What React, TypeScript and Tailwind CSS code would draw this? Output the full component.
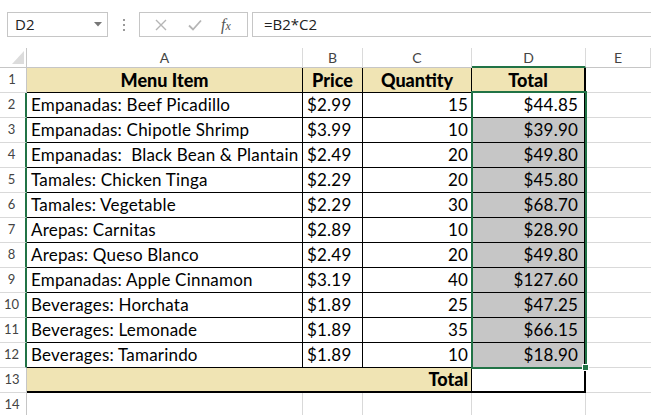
import React from 'react';

const items: [string, string, number, string][] = [
  ['Empanadas: Beef Picadillo', '$2.99', 15, '$44.85'],
  ['Empanadas: Chipotle Shrimp', '$3.99', 10, '$39.90'],
  ['Empanadas:  Black Bean & Plantain', '$2.49', 20, '$49.80'],
  ['Tamales: Chicken Tinga', '$2.29', 20, '$45.80'],
  ['Tamales: Vegetable', '$2.29', 30, '$68.70'],
  ['Arepas: Carnitas', '$2.89', 10, '$28.90'],
  ['Arepas: Queso Blanco', '$2.49', 20, '$49.80'],
  ['Empanadas: Apple Cinnamon', '$3.19', 40, '$127.60'],
  ['Beverages: Horchata', '$1.89', 25, '$47.25'],
  ['Beverages: Lemonade', '$1.89', 35, '$66.15'],
  ['Beverages: Tamarindo', '$1.89', 10, '$18.90'],
];

const cellFont = { fontFamily: 'Lato, "Open Sans", sans-serif' };

function RowNum({ n, selected }: { n: number; selected?: boolean }) {
  return (
    <div
      className={
        'h-[25px] flex items-center justify-center text-[13px] text-[#444] tracking-normal border-b border-[#d9d9d9] pr-[2px] ' +
        (selected ? 'border-r-2 border-r-[#217346]' : 'border-r border-r-[#c6c6c6]')
      }
    >
      {n}
    </div>
  );
}

export default function App() {
  return (
    <div className="w-[651px] h-[415px] overflow-hidden bg-white text-black" style={cellFont}>
      {/* formula bar */}
      <div className="h-[48px] pt-[12px] flex items-start" style={{ fontFamily: '"Open Sans", "Noto Sans", sans-serif' }}>
        <div className="ml-[7px] w-[101px] h-[25px] border border-[#c6c6c6] flex items-center pl-[7px] pr-[5px] text-[15px] text-[#222]">
          <span className="flex-1">D2</span>
          <svg width="8" height="5" viewBox="0 0 8 5">
            <polygon points="0,0 8,0 4,4.5" fill="#777" />
          </svg>
        </div>
        <div className="w-[31px] h-[25px] flex flex-col items-center justify-center gap-[3px]">
          <span className="w-[2px] h-[2px] bg-[#9a9a9a]" />
          <span className="w-[2px] h-[2px] bg-[#9a9a9a]" />
          <span className="w-[2px] h-[2px] bg-[#9a9a9a]" />
        </div>
        <div className="w-[109px] h-[25px] border border-[#c6c6c6] flex items-center">
          <svg className="ml-[15px]" width="12" height="12" viewBox="0 0 12 12">
            <path d="M1 1 L11 11 M11 1 L1 11" stroke="#b5b5b5" strokeWidth="1.4" fill="none" />
          </svg>
          <svg className="ml-[21px]" width="14" height="12" viewBox="0 0 14 12">
            <path d="M1 6.5 L5 10.5 L13 1.5" stroke="#b5b5b5" strokeWidth="1.8" fill="none" />
          </svg>
          <span
            className="ml-[19px] italic text-[16px] text-[#555] leading-none"
            style={{ fontFamily: '"Liberation Serif", serif' }}
          >
            f<span className="text-[12px]">x</span>
          </span>
        </div>
        <div className="ml-[4px] flex-1 h-[25px] border border-r-0 border-[#c6c6c6] flex items-center pl-[11px] text-[15px] text-[#222]">
          =B2*C2
        </div>
      </div>

      {/* sheet */}
      <div className="relative">
        <div className="grid grid-cols-[27px_276px_60px_109px_114px_1fr]">
          {/* column headers */}
          <div className="h-[20px] border-r border-b border-[#c6c6c6] flex items-end justify-end pr-[2px] pb-[3px]">
            <svg width="12" height="13" viewBox="0 0 12 13">
              <polygon points="12,0 12,13 0,13" fill="#dcdcdc" />
            </svg>
          </div>
          {['A', 'B', 'C', 'D', 'E'].map((c) => (
            <div
              key={c}
              className={
                'h-[20px] flex items-center justify-center text-[14px] text-[#444] border-r border-r-[#dadada] ' +
                (c === 'D' ? 'border-b-2 border-b-[#217346]' : 'border-b border-b-[#c6c6c6]')
              }
            >
              {c}
            </div>
          ))}

          {/* row 1 */}
          <RowNum n={1} />
          {['Menu Item', 'Price', 'Quantity'].map((h) => (
            <div
              key={h}
              className="h-[25px] bg-[#f0e4b4] border-r border-b border-black flex items-center justify-center font-black text-[18px]"
            >
              {h}
            </div>
          ))}
          <div className="h-[25px] bg-[#f0e4b4] border-r-2 border-b border-black flex items-center justify-center font-black text-[18px]">
            Total
          </div>
          <div className="h-[25px] border-b border-[#d9d9d9]" />

          {/* data rows */}
          {items.map(([name, price, qty, total], i) => (
            <React.Fragment key={name}>
              <RowNum n={i + 2} selected />
              <div className="h-[25px] border-r border-b border-black flex items-center pl-[4px] text-[17px] tracking-[0.2px] whitespace-pre">
                {name}
              </div>
              <div className="h-[25px] border-r border-b border-black flex items-center pl-[4px] text-[17px] tracking-[0.2px]">
                {price}
              </div>
              <div className="h-[25px] border-r border-b border-black flex items-center justify-end pr-[3px] text-[17px] tracking-[0.2px]">
                {qty}
              </div>
              <div
                className={
                  'h-[25px] border-r-2 border-b border-black flex items-center justify-end pr-[6px] text-[17px] tracking-[0.2px] ' +
                  (i === 0 ? 'bg-white' : 'bg-[#c6c6c6]')
                }
              >
                {total}
              </div>
              <div className="h-[25px] border-b border-[#d9d9d9]" />
            </React.Fragment>
          ))}

          {/* row 13 */}
          <RowNum n={13} />
          <div className="col-span-3 h-[25px] bg-[#f0e4b4] border-r border-black border-b-2 flex items-center justify-end pr-[3px] font-black text-[18px]">
            Total
          </div>
          <div className="h-[25px] border-r-2 border-b-2 border-black" />
          <div className="h-[25px] border-b border-[#d9d9d9]" />

          {/* row 14 */}
          <RowNum n={14} />
          <div className="h-[25px] border-r border-[#d9d9d9]" />
          <div className="h-[25px] border-r border-[#d9d9d9]" />
          <div className="h-[25px] border-r border-[#d9d9d9]" />
          <div className="h-[25px] border-r border-[#d9d9d9]" />
          <div className="h-[25px]" />
        </div>

        {/* selection D2:D12 */}
        <div className="absolute left-[471px] top-[43px] w-[116px] h-[278px] border-2 border-[#217346] pointer-events-none" />
        <div className="absolute left-[582px] top-[316px] w-[7px] h-[7px] bg-[#217346] border border-white pointer-events-none" />
      </div>
    </div>
  );
}
